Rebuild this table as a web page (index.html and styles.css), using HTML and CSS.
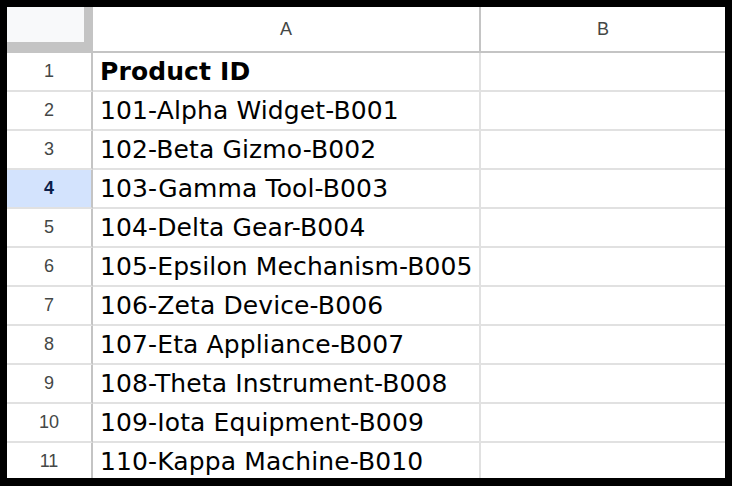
FILE: index.html
```html
<!DOCTYPE html>
<html>
<head>
<meta charset="utf-8">
<link rel="stylesheet" href="styles.css">
</head>
<body>
<div class="frame">
  <div class="sheet">
    <div class="corner"><div class="corner-fill"></div></div>
    <div class="colhead">A</div>
    <div class="colhead last">B</div>

    <div class="rowhead">1</div><div class="cell bold">Product ID</div><div class="cell last"></div>
    <div class="rowhead">2</div><div class="cell">101-Alpha Widget-B001</div><div class="cell last"></div>
    <div class="rowhead">3</div><div class="cell">102-Beta Gizmo-B002</div><div class="cell last"></div>
    <div class="rowhead active">4</div><div class="cell">103-Gamma Tool-B003</div><div class="cell last"></div>
    <div class="rowhead">5</div><div class="cell">104-Delta Gear-B004</div><div class="cell last"></div>
    <div class="rowhead">6</div><div class="cell">105-Epsilon Mechanism-B005</div><div class="cell last"></div>
    <div class="rowhead">7</div><div class="cell">106-Zeta Device-B006</div><div class="cell last"></div>
    <div class="rowhead">8</div><div class="cell">107-Eta Appliance-B007</div><div class="cell last"></div>
    <div class="rowhead">9</div><div class="cell">108-Theta Instrument-B008</div><div class="cell last"></div>
    <div class="rowhead">10</div><div class="cell">109-Iota Equipment-B009</div><div class="cell last"></div>
    <div class="rowhead">11</div><div class="cell">110-Kappa Machine-B010</div><div class="cell last"></div>
  </div>
</div>
</body>
</html>
```

FILE: styles.css
```css
html, body {
  margin: 0;
  padding: 0;
  background: #000;
}
.frame {
  width: 732px;
  height: 486px;
  box-sizing: border-box;
  padding: 7px 7px 8px 7px;
  background: #000;
}
.sheet {
  width: 718px;
  height: 471px;
  overflow: hidden;
  background: #fff;
  display: grid;
  grid-template-columns: 86px 388px 244px;
  grid-auto-rows: 39px;
  grid-template-rows: 46px;
}
.corner {
  background: #c4c4c4;
}
.corner-fill {
  width: 77px;
  height: 35px;
  background: #f8f9fa;
}
.colhead {
  box-sizing: border-box;
  border-right: 2px solid #c4c4c4;
  border-bottom: 2px solid #c4c4c4;
  display: flex;
  align-items: center;
  justify-content: center;
  font-family: "Liberation Sans", Arial, sans-serif;
  font-size: 18px;
  color: #444746;
  padding-top: 1px;
}
.colhead.last {
  border-right: none;
}
.rowhead {
  box-sizing: border-box;
  border-right: 2px solid #c4c4c4;
  border-bottom: 2px solid #e1e1e1;
  display: flex;
  align-items: center;
  justify-content: center;
  font-family: "Liberation Sans", Arial, sans-serif;
  font-size: 18px;
  color: #444746;
}
.rowhead.active {
  background: #d3e3fd;
  color: #0b1e49;
  font-weight: bold;
}
.cell {
  box-sizing: border-box;
  border-right: 2px solid #e1e1e1;
  border-bottom: 2px solid #e1e1e1;
  display: flex;
  align-items: center;
  padding-left: 7px;
  font-family: "DejaVu Sans", Verdana, sans-serif;
  font-size: 25px;
  letter-spacing: 0.12px;
  color: #000;
  white-space: nowrap;
  overflow: hidden;
}
.cell.last {
  border-right: none;
}
.cell.bold {
  font-weight: bold;
}
```
